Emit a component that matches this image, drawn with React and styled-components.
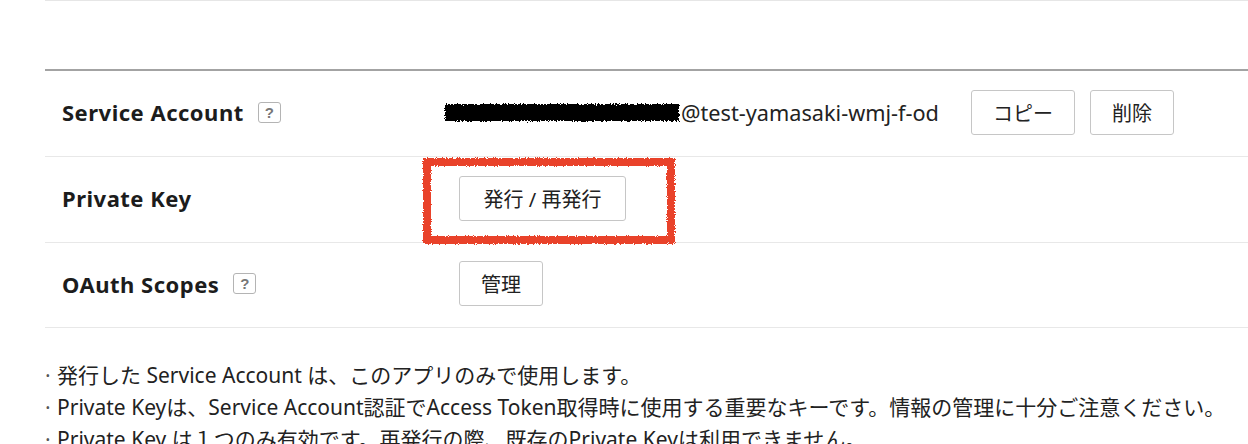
import React from 'react';
import styled, { createGlobalStyle } from 'styled-components';

const GlobalStyle = createGlobalStyle`
    html, body {
        margin: 0;
        padding: 0;
        background: #ffffff;
    }
    body {
        font-family: 'Noto Sans', 'Noto Sans CJK JP', sans-serif;
        color: #222222;
        overflow: hidden;
    }
`;

const Page = styled.div`
    width: 1248px;
    height: 444px;
    padding-left: 45px;
    box-sizing: border-box;
`;

const Spacer = styled.div`
    height: 68px;
    border-top: 1px solid #e6e6e6;
`;

const Table = styled.div`
    border-top: 2px solid #a3a3a3;
`;

const Row = styled.div`
    position: relative;
    display: flex;
    align-items: center;
    box-sizing: border-box;
    height: ${(p) => p.$height || 85}px;
    padding-bottom: 3px;
    border-bottom: 1px solid #e8e8e8;
`;

const Label = styled.div`
    display: flex;
    align-items: center;
    gap: 14px;
    width: 414px;
    padding-left: 17px;
    box-sizing: border-box;
    font-size: 22px;
    font-weight: 700;
    color: #1c1c1c;
    letter-spacing: 0.5px;
`;

const Help = styled.span`
    display: inline-flex;
    align-items: center;
    justify-content: center;
    width: 21px;
    height: 19px;
    border: 1px solid #b4b4b4;
    border-radius: 3px;
    font-size: 15px;
    font-weight: 700;
    letter-spacing: 0;
    color: #777777;
    font-family: 'Liberation Sans', sans-serif;
`;

const Value = styled.div`
    display: flex;
    align-items: center;
`;

const Email = styled.span`
    display: flex;
    align-items: center;
    font-size: 21.7px;
    color: #222222;
    margin-left: -16px;
    margin-right: 32px;
`;

const Redact = styled.svg`
    display: block;
    margin-top: 2px;
`;

const Buttons = styled.div`
    display: flex;
    gap: 15px;
`;

const Button = styled.button`
    height: 45px;
    padding: 0 ${(p) => p.$pad || 21}px;
    border: 1px solid #c6c6c6;
    border-radius: 3px;
    background: #ffffff;
    font-family: 'Noto Sans', 'Noto Sans CJK JP', sans-serif;
    font-size: 20px;
    color: #222222;
    cursor: pointer;
    min-width: ${(p) => p.$min || 0}px;
    white-space: pre;
`;

const Marker = styled.svg`
    position: absolute;
    left: 377px;
    top: 0px;
    pointer-events: none;
`;

const Notes = styled.ul`
    list-style: none;
    margin: 31px 0 0;
    padding: 0;
    font-size: 21px;
    line-height: 32px;
    color: #222222;
    white-space: nowrap;

    li::before {
        content: '·';
        display: inline-block;
        width: 12px;
        color: #555555;
    }
`;

const App = () => {
    return (
        <Page>
            <GlobalStyle />
            <Spacer />
            <Table>
                <Row $height={86}>
                    <Label>
                        Service Account <Help>?</Help>
                    </Label>
                    <Value>
                        <Email>
                            <Redact width="238" height="24" viewBox="0 0 238 24">
                                <defs>
                                    <filter id="rough">
                                        <feTurbulence type="fractalNoise" baseFrequency="0.7" numOctaves="2" seed="3" />
                                        <feDisplacementMap in="SourceGraphic" scale="5" />
                                    </filter>
                                </defs>
                                <rect x="2" y="3" width="234" height="17" fill="#000" filter="url(#rough)" />
                            </Redact>
                            @test-yamasaki-wmj-f-od
                        </Email>
                        <Buttons>
                            <Button $min={101}>コピー</Button>
                            <Button $min={82}>削除</Button>
                        </Buttons>
                    </Value>
                </Row>
                <Row $height={86}>
                    <Label>Private Key</Label>
                    <Value>
                        <Button $min={167}>発行 / 再発行</Button>
                    </Value>
                    <Marker width="256" height="90" viewBox="0 0 256 90">
                        <defs>
                            <filter id="crayon">
                                <feTurbulence type="fractalNoise" baseFrequency="0.9" numOctaves="2" seed="7" />
                                <feDisplacementMap in="SourceGraphic" scale="4" />
                            </filter>
                        </defs>
                        <rect x="5" y="5" width="244" height="78" fill="none" stroke="#e9432a" strokeWidth="8" filter="url(#crayon)" />
                    </Marker>
                </Row>
                <Row $height={85}>
                    <Label>
                        OAuth Scopes <Help>?</Help>
                    </Label>
                    <Value>
                        <Button $min={83}>管理</Button>
                    </Value>
                </Row>
            </Table>
            <Notes>
                <li>発行した Service Account は、このアプリのみで使用します。</li>
                <li>Private Keyは、Service Account認証でAccess Token取得時に使用する重要なキーです。情報の管理に十分ご注意ください。</li>
                <li>Private Key は１つのみ有効です。再発行の際、既存のPrivate Keyは利用できません。</li>
            </Notes>
        </Page>
    );
};

export default App;
